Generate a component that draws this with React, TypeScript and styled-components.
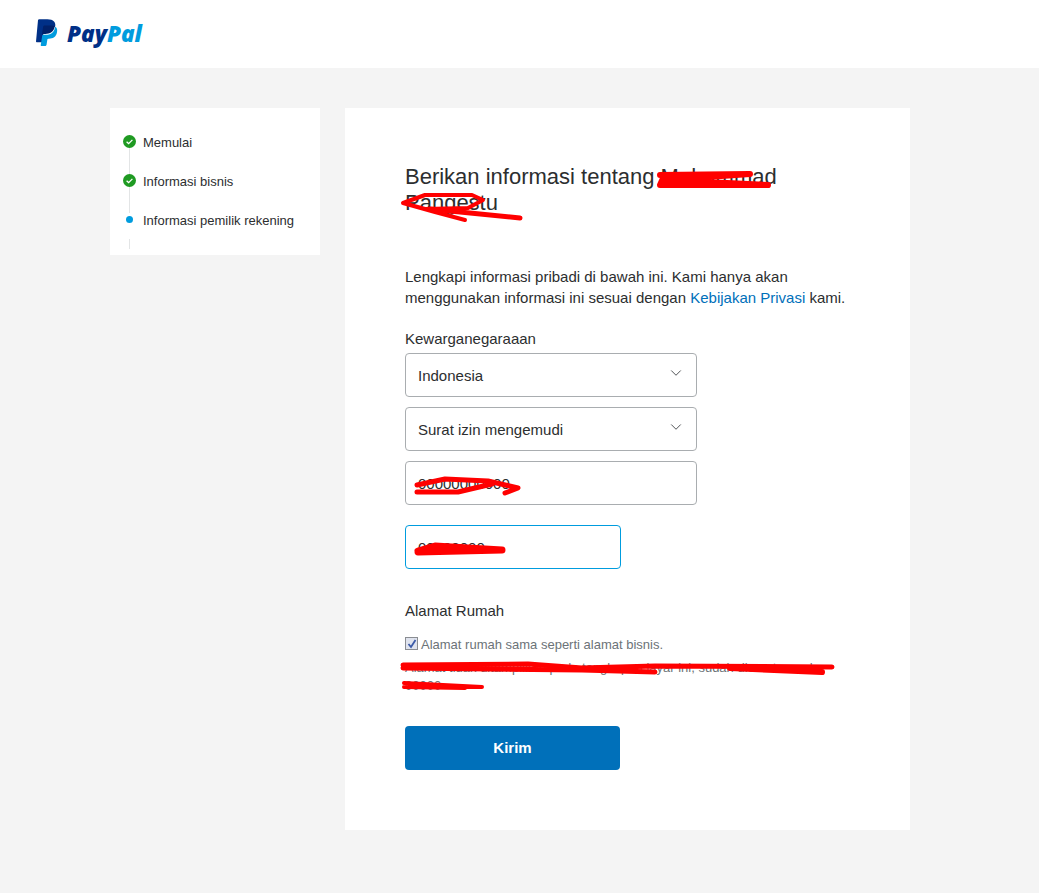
import React from "react";
import styled, { createGlobalStyle } from "styled-components";
import { ChevronDown } from "lucide-react";

const GlobalStyle = createGlobalStyle`
  html, body {
    margin: 0;
    padding: 0;
    background: #f4f4f4;
    font-family: "Liberation Sans", Arial, sans-serif;
    color: #2c2e2f;
  }
`;

const Header = styled.header`
  height: 68px;
  background: #fff;
  display: flex;
  align-items: flex-start;
  padding: 19px 0 0 36px;
  box-sizing: border-box;
  gap: 8px;
`;

const Wordmark = styled.div`
  font-family: "Open Sans", "Liberation Sans", sans-serif;
  font-style: italic;
  font-weight: 800;
  font-size: 22.5px;
  line-height: 29px;
  color: #003087;
  span {
    color: #009cde;
  }
`;

const Main = styled.main`
  display: flex;
  align-items: flex-start;
  gap: 25px;
  padding: 40px 0 60px 110px;
`;

const Sidebar = styled.aside`
  width: 210px;
  height: 147px;
  background: #fff;
  padding-top: 14px;
  box-sizing: border-box;
  position: relative;
`;

const Step = styled.div`
  height: 39px;
  display: flex;
  align-items: center;
  gap: 7px;
  padding-left: 13px;
  font-size: 13px;
  color: #2c2e2f;
  position: relative;
`;

const Marker = styled.span`
  width: 13px;
  height: 13px;
  display: flex;
  align-items: center;
  justify-content: center;
  flex: none;
`;

const StepLabel = styled.span`
  position: relative;
  top: 1px;
`;

const Dot = styled.span`
  width: 7px;
  height: 7px;
  border-radius: 50%;
  background: #009cde;
`;

const Connector = styled.span<{ $top: number; $height: number }>`
  position: absolute;
  left: 19px;
  top: ${(p) => p.$top}px;
  width: 1px;
  height: ${(p) => p.$height}px;
  background: #e3e5e6;
`;

const Card = styled.section`
  width: 565px;
  height: 722px;
  background: #fff;
  padding: 56px 60px 0;
  box-sizing: border-box;
  position: relative;
`;

const Title = styled.h1`
  margin: 0 0 50px;
  font-size: 22px;
  font-weight: 400;
  line-height: 26px;
  color: #2c2e2f;
`;

const Intro = styled.p`
  margin: 1px 0 21px;
  font-size: 15px;
  line-height: 21px;
`;

const PrivacyLink = styled.a`
  color: #0070ba;
  text-decoration: none;
`;

const Label = styled.div`
  font-size: 15px;
  line-height: 20px;
  margin-bottom: 4px;
`;

const Field = styled.div<{ $width?: number; $focus?: boolean; $gap?: number }>`
  width: ${(p) => p.$width ?? 292}px;
  height: 44px;
  box-sizing: border-box;
  border: 1px solid ${(p) => (p.$focus ? "#009cde" : "#a9adb0")};
  border-radius: 4px;
  margin-bottom: ${(p) => p.$gap ?? 10}px;
  padding: 0 12px;
  display: flex;
  align-items: center;
  justify-content: space-between;
  font-size: 15px;
  color: #2c2e2f;
  background: #fff;
`;

const Chevron = styled(ChevronDown)`
  margin: -4px -1px 0 0;
  color: #3e4245;
`;

const SectionLabel = styled(Label)`
  margin: 32px 0 15px;
`;

const CheckRow = styled.div`
  display: flex;
  align-items: center;
  gap: 3px;
  font-size: 13px;
  line-height: 18px;
  color: #6c7378;
`;

const CheckBox = styled.span`
  width: 13px;
  height: 13px;
  box-sizing: border-box;
  border: 1px solid #8a8d92;
  background: #dfe3ee;
  display: flex;
  align-items: center;
  justify-content: center;
  flex: none;
  margin-top: -3px;
`;

const Address = styled.p`
  margin: 5px 0 31px;
  font-size: 13px;
  line-height: 18px;
  color: #6c7378;
  width: 430px;
`;

const SubmitButton = styled.button`
  width: 215px;
  height: 44px;
  border: 0;
  border-radius: 4px;
  padding: 0 0 2px;
  background: #0070ba;
  color: #fff;
  font-family: inherit;
  font-size: 15px;
  font-weight: 700;
  display: block;
`;

// red marker scribbles lying over the redacted text
const Scribbles = styled.svg`
  position: absolute;
  left: 0;
  top: 0;
  width: 565px;
  height: 722px;
  pointer-events: none;
`;

const Scribble = styled.path.attrs({ fill: "none", stroke: "#ff0000" })<{ $w: number }>`
  stroke-width: ${(p) => p.$w};
  stroke-linecap: round;
  stroke-linejoin: round;
`;

const Logo = () => (
  <svg width="23" height="27" viewBox="0 0 23 27" aria-hidden="true">
    <path
      d="M19.2 7.4c.3-2.2 0-3.600-1.200-5C16.700.9 14.400.2 11.400.2H3.200c-.6 0-1.100.4-1.200 1L0 22.500c0 .4.300.8.700.8h5.400l1.300-8.500z"
      fill="#003087"
    />
    <path
      d="M19.200 7.400l-.2 1c-1 5.500-4.700 7.400-9.400 7.400H7.300c-.6 0-1 .4-1.100 1L5 24.500l-.3 1.800c0 .4.200.7.600.7h4.100c.5 0 .9-.4 1-.9l.1-.2.800-5v-.3c.1-.5.500-.9 1-.9h.600c4 0 7.200-1.600 8.100-6.400.4-2 .2-3.700-.8-4.800-.3-.4-.7-.7-1.200-.9z"
      fill="#009cde"
    />
    <path
      d="M18.100 7c-.2-.1-.3-.1-.5-.1-.200 0-.4-.1-.6-.1-.700-.1-1.400-.2-2.200-.2H8.300c-.2 0-.3 0-.5.1-.3.100-.5.400-.6.800l-1.300 8.200v.2c.1-.6.600-1 1.100-1h2.300c4.700 0 8.400-1.900 9.400-7.400 0-.2.100-.3.100-.5-.2-.1-.5-.2-.7-.3z"
      fill="#012169"
    />
  </svg>
);

const CheckIcon = () => (
  <svg width="13" height="13" viewBox="0 0 13 13" aria-hidden="true">
    <circle cx="6.500" cy="6.500" r="6.500" fill="#1f9a22" />
    <path d="M3.600 6.800l2 1.800 3.800-3.700" fill="none" stroke="#fff" strokeWidth="1.300" />
  </svg>
);

const App = () => {
  return (
    <>
      <GlobalStyle />
      <Header>
        <Logo />
        <Wordmark>
          Pay<span>Pal</span>
        </Wordmark>
      </Header>
      <Main>
        <Sidebar>
          <Connector $top={40} $height={26} />
          <Connector $top={79} $height={26} />
          <Connector $top={131} $height={10} />
          <Step>
            <Marker>
              <CheckIcon />
            </Marker>
            <StepLabel>Memulai</StepLabel>
          </Step>
          <Step>
            <Marker>
              <CheckIcon />
            </Marker>
            <StepLabel>Informasi bisnis</StepLabel>
          </Step>
          <Step>
            <Marker>
              <Dot />
            </Marker>
            <StepLabel>Informasi pemilik rekening</StepLabel>
          </Step>
        </Sidebar>
        <Card>
          <Title>Berikan informasi tentang Muhammad Pangestu</Title>
          <Intro>
            Lengkapi informasi pribadi di bawah ini. Kami hanya akan menggunakan informasi ini sesuai
            dengan <PrivacyLink href="#">Kebijakan Privasi</PrivacyLink> kami.
          </Intro>
          <Label>Kewarganegaraaan</Label>
          <Field>
            Indonesia
            <Chevron size={18} strokeWidth={1.2} />
          </Field>
          <Field>
            Surat izin mengemudi
            <Chevron size={18} strokeWidth={1.2} />
          </Field>
          <Field $gap={20}>00000000000</Field>
          <Field $width={216} $focus $gap={0}>
            00000000
          </Field>
          <SectionLabel>Alamat Rumah</SectionLabel>
          <CheckRow>
            <CheckBox>
              <svg width="10" height="10" viewBox="0 0 10 10" aria-hidden="true">
                <path d="M1.500 5l2.500 3 4.500-7" fill="none" stroke="#3b5aa8" strokeWidth="1.800" />
              </svg>
            </CheckBox>
            Alamat rumah sama seperti alamat bisnis.
          </CheckRow>
          <Address>Alamat tidak ditampilkan pada tangkapan layar ini, sudah dicoret merah, 00000</Address>
          <SubmitButton>Kirim</SubmitButton>
          <Scribbles viewBox="0 0 565 722">
            <g transform="translate(-345 -108)">
              <Scribble $w={6} d="M660 175L750 174L664 180L768 185L660 185L664 176" />
              <Scribble $w={4} d="M403 203L425 195L472 195L483 200L468 208L425 209L403 203L435 212L465 220" />
              <Scribble $w={5} d="M430 209L520 218" />
              <Scribble $w={5} d="M417 485L445 479L488 481L518 488L505 493" />
              <Scribble $w={5} d="M417 492L458 492L492 484" />
              <Scribble $w={7} d="M418 551L435 546L468 548L502 550L418 552" />
              <Scribble $w={5} d="M403 665L528 664L582 668L655 666L832 667" />
              <Scribble $w={5} d="M403 668L582 670L655 672" />
              <Scribble $w={6} d="M730 668L822 672" />
              <Scribble $w={4} d="M404 683L482 687L404 687L465 688" />
            </g>
          </Scribbles>
        </Card>
      </Main>
    </>
  );
};

export default App;
